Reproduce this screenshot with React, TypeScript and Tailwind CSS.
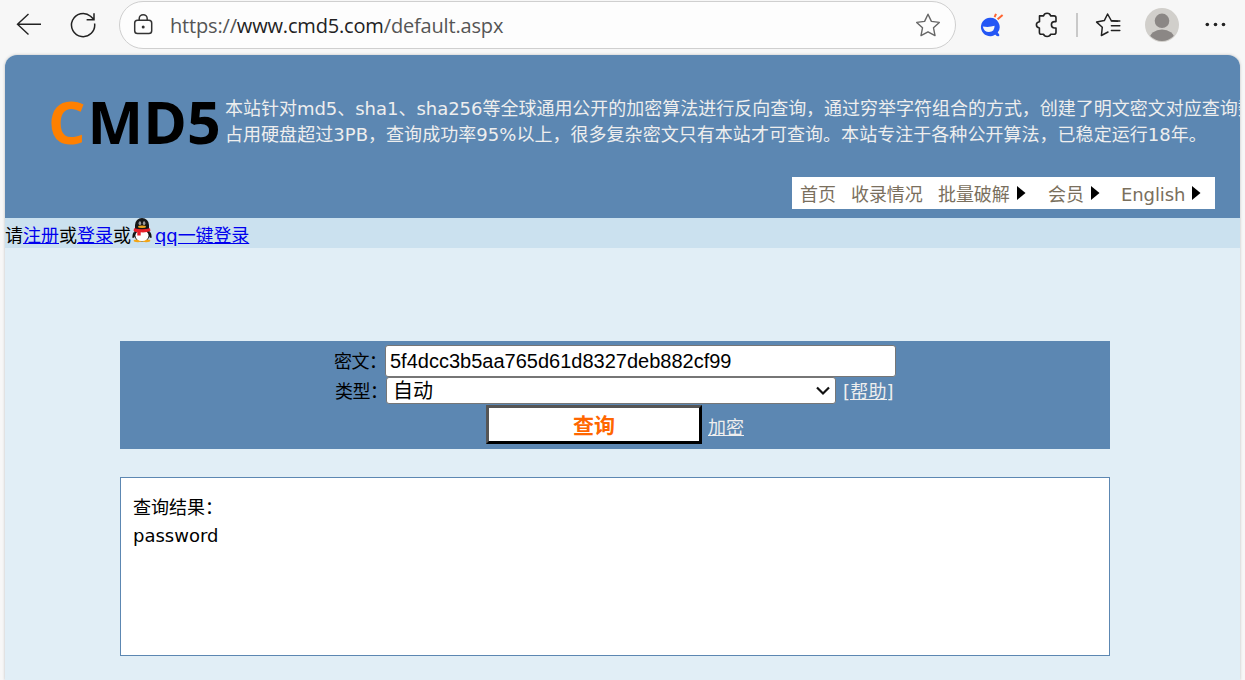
import { useState } from 'react'

const INTRO = [
    {
        text: '本站针对md5、sha1、sha256等全球通用公开的加密算法进行反向查询，通过穷举字符组合的方式，创建了明文密文对应查询数',
        style: 'tracking-[-0.02px]',
    },
    {
        text: '占用硬盘超过3PB，查询成功率95%以上，很多复杂密文只有本站才可查询。本站专注于各种公开算法，已稳定运行18年。',
        style: 'tracking-[0.04px]',
    },
]

const MENU = [
    { label: '首页', sub: false, style: 'w-[51px]' },
    { label: '收录情况', sub: false, style: 'w-[87px]' },
    { label: '批量破解', sub: true, style: 'w-[110px]' },
    { label: '会员', sub: true, style: 'w-[73px]' },
    { label: 'English', sub: true, style: 'w-[86px]' },
]

const Toolbar = () => {
    return (
        <div className="flex h-[55px] shrink-0 items-start">
            <svg className="ml-4 mt-3 shrink-0" width="26" height="26" viewBox="0 0 26 26" fill="none" stroke="#222" strokeWidth="1.4">
                <path d="M25 12.3H1.5M12.5 2L1.5 12.3L12.5 22.5" />
            </svg>
            <svg className="ml-[28px] mt-3 shrink-0" width="27" height="26" viewBox="0 0 27 26" fill="none" stroke="#222" strokeWidth="1.5">
                <path d="M24.6 11.5A11.6 11.6 0 1 1 20.6 4.2L24 7.6M24 1.2V7.7H16.6" />
            </svg>
            <div className="ml-[22px] mt-px flex h-12 w-[837px] shrink-0 items-center rounded-full border-[1.5px] border-[#cfcfcf] bg-[#fdfdfd]">
                <svg className="-mt-px ml-3 shrink-0" width="22" height="24" viewBox="0 0 22 24" fill="none" stroke="#333" strokeWidth="1.5">
                    <rect x="2.7" y="7.2" width="17" height="13.3" rx="2.8" />
                    <path d="M7.2 7V5.7a4 4 0 0 1 8 0V7" />
                    <circle cx="11.2" cy="14" r="1.5" fill="#333" stroke="none" />
                </svg>
                <span className="ml-4 mt-0.5 whitespace-nowrap font-['Open_Sans',sans-serif] text-[20px] leading-7 tracking-[-0.17px] text-[#555]">
                    https://<span className="text-[#222]">www.cmd5.com</span>/default.aspx
                </span>
                <svg className="ml-auto mr-[14px] shrink-0" width="26" height="26" viewBox="0 0 26 26" fill="none" stroke="#666" strokeWidth="1.4" strokeLinejoin="round">
                    <path d="M13 2.2L16.4 9.4L24.3 10.4L18.5 15.8L20 23.6L13 19.8L6 23.6L7.5 15.8L1.7 10.4L9.6 9.4Z" />
                </svg>
            </div>
            <svg className="ml-6 mt-3 shrink-0" width="24" height="26" viewBox="0 0 24 26">
                <path d="M10 5.8a9.2 9.2 0 1 0 5 17l.5 0q.8 1.8 3 1.4q1.5-.5.4-2.2l-1.2-1.4A9.2 9.2 0 0 0 10 5.8Z" fill="#2456f5" />
                <path d="M2.8 14.5Q9 15.6 14.6 13.8Q14.6 20 9 20Q4 20 2.8 14.5Z" fill="#f7f7f7" />
                <path d="M14.6 5.2L16 1.8M17.6 7.3L22.6 3" stroke="#ff6430" strokeWidth="2" />
            </svg>
            <svg className="ml-[31px] mt-3 shrink-0" width="24" height="26" viewBox="0 0 24 26" fill="none" stroke="#222" strokeWidth="1.6" strokeLinejoin="round">
                <path d="M4.5 3.9H8.6Q9.2 1.3 12.1 1.3T15.6 3.9H19q2 0 2 2V9.6H19.6a3.2 3.2 0 0 0 0 6.4H21V20.3q0 2-2 2H15.6Q15 24.5 12.1 24.5T8.6 22.3H6q-1.6 0-1.6-2V16Q1.4 15.5 1.4 12.8T4.5 9.7Z" />
            </svg>
            <div className="ml-[17px] mt-[13px] h-6 w-[1.5px] shrink-0 bg-[#c9c9c9]" />
            <svg className="ml-[17px] mt-3 shrink-0" width="26" height="26" viewBox="0 0 26 26" fill="none" stroke="#222" strokeWidth="1.5" strokeLinejoin="round" strokeLinecap="round">
                <path d="M22.5 9.2L16.2 8.5L12.6 2L9.3 8.6L1.6 10.1L7.3 15.2L6.4 23.5L13 20" />
                <path d="M16.4 9.1H24.8M16.4 13.8H24.8M16.4 18.4H24.8" />
            </svg>
            <svg className="ml-6 mt-2 shrink-0" width="34" height="34" viewBox="0 0 34 34">
                <clipPath id="avatar"><circle cx="17" cy="17" r="16" /></clipPath>
                <circle cx="17" cy="17" r="17" fill="#d1cfcb" />
                <g fill="#8b8785" clipPath="url(#avatar)">
                    <circle cx="17" cy="12.8" r="7.3" />
                    <ellipse cx="17" cy="31" rx="12.5" ry="9.5" />
                </g>
            </svg>
            <svg className="ml-[26px] mt-[22px] shrink-0" width="21" height="6" viewBox="0 0 21 6" fill="#222">
                <circle cx="2.3" cy="2.5" r="1.8" />
                <circle cx="10.5" cy="2.5" r="1.8" />
                <circle cx="18.5" cy="2.5" r="1.8" />
            </svg>
        </div>
    )
}

const Penguin = () => {
    return (
        <svg className="ml-px shrink-0" width="20" height="25" viewBox="0 0 20 25">
            <path d="M2.6 12.5Q-.3 17 .6 20Q1.8 20.6 3 17.5M17.4 12.5Q20.3 17 19.4 20Q18.2 20.6 17 17.5" fill="#111" />
            <ellipse cx="10" cy="16.8" rx="8" ry="6.8" fill="#111" />
            <ellipse cx="5.8" cy="22.8" rx="4.2" ry="1.4" fill="#f2a516" />
            <ellipse cx="14.2" cy="22.8" rx="4.2" ry="1.4" fill="#f2a516" />
            <ellipse cx="10" cy="17.6" rx="6.6" ry="5.5" fill="#fff" />
            <path d="M3 11.5V7A7 7 0 0 1 17 7V11.5Z" fill="#161616" />
            <ellipse cx="7.9" cy="5.2" rx="1.3" ry="1.9" fill="#999" />
            <ellipse cx="12.1" cy="5.2" rx="1.3" ry="1.9" fill="#999" />
            <ellipse cx="10" cy="8.7" rx="4" ry="1.2" fill="#eda51c" />
            <path d="M2 10.3Q10 12 18 10.3L18.4 13Q14 14.8 8.7 14.3V17.5H5.3V14.2Q3 13.8 1.6 13Z" fill="#e8202a" />
        </svg>
    )
}

const App = () => {

    const [hash, setHash] = useState('5f4dcc3b5aa765d61d8327deb882cf99')

    return (
        <div className="flex h-[680px] w-[1245px] flex-col overflow-hidden bg-[#f7f7f7] font-['DejaVu_Sans','Noto_Sans_CJK_SC',sans-serif] text-[18px] text-black">
            <Toolbar />
            <div className="ml-[5px] flex w-[1235px] flex-1 flex-col overflow-hidden rounded-t-xl bg-[#e1eef6] shadow-[0_0_3px_#bbb]">

                <header className="flex h-[163px] shrink-0 flex-col bg-[#5c87b2]">
                    <div className="flex h-[122px] shrink-0">
                        <div className="ml-[43px] mt-[25px] w-[177px] shrink-0 whitespace-nowrap font-['Open_Sans',sans-serif] text-[59px] font-bold leading-[82px]">
                            <span className="mr-[2px] text-[#ff8000]">C</span>MD5
                        </div>
                        <div className="mt-[41px] whitespace-nowrap leading-[26px] text-[#eee]">
                            {INTRO.map((line) => (
                                <p key={line.text} className={line.style}>{line.text}</p>
                            ))}
                        </div>
                    </div>
                    <nav className="ml-auto mr-[25px] flex h-8 w-[423px] items-center bg-white pl-2 pt-0.5 text-[#7a6f5d]">
                        {MENU.map((item) => (
                            <a key={item.label} className={`flex shrink-0 items-center whitespace-nowrap tracking-[-0.1px] ${item.style}`}>
                                {item.label}
                                {item.sub && (
                                    <svg className="-mt-[3px] ml-[7px]" width="9" height="16" viewBox="0 0 9 16">
                                        <path d="M0 1L8.5 8L0 15Z" fill="#000" />
                                    </svg>
                                )}
                            </a>
                        ))}
                    </nav>
                </header>

                <div className="flex h-[30px] shrink-0 items-start whitespace-nowrap bg-[#cbe1ef] leading-[35px]">
                    <span>请</span>
                    <a className="text-[#0000ee] underline">注册</a>
                    <span>或</span>
                    <a className="text-[#0000ee] underline">登录</a>
                    <span>或</span>
                    <Penguin />
                    <a className="ml-[3px] tracking-[-0.1px] text-[#0000ee] underline">qq一键登录</a>
                </div>

                <main className="mx-[115px] mt-[93px] w-[990px]">
                    <div className="h-[108px] bg-[#5c87b2] pt-1">
                        <div className="flex h-8 items-center pl-[214px]">
                            <label className="w-[51px] whitespace-nowrap tracking-[-0.5px]">密文：</label>
                            <input
                                className="h-8 w-[511px] rounded-[3px] border border-[#767676] bg-white px-1 font-['Liberation_Sans',sans-serif] text-[20px] outline-none"
                                value={hash}
                                onChange={(e) => setHash(e.target.value)}
                            />
                        </div>
                        <div className="flex h-[27px] items-center pl-[215px]">
                            <label className="mt-0.5 w-[51px] whitespace-nowrap tracking-[-0.5px]">类型：</label>
                            <div className="flex h-[27px] w-[450px] items-center justify-between rounded-[3px] border border-[#767676] bg-white pl-1.5 pr-[5px] text-[20px]">
                                自动
                                <svg width="14" height="10" viewBox="0 0 14 10" fill="none" stroke="#111" strokeWidth="2.2">
                                    <path d="M1 1.5L7 7.5L13 1.5" />
                                </svg>
                            </div>
                            <a className="ml-[7px] mt-0.5 tracking-[0.2px] text-[#eee] underline">[帮助]</a>
                        </div>
                        <div className="flex items-center pl-[366px]">
                            <button className="mt-px h-[39px] w-[216px] border-[3px] border-b-black border-l-[#555] border-r-black border-t-[#555] bg-white pt-[3px] text-[21px] font-bold leading-[30px] text-[#ff6600]">
                                查询
                            </button>
                            <a className="ml-1.5 mt-[7px] text-[#eee] underline">加密</a>
                        </div>
                    </div>

                    <div className="mt-7 h-[179px] border border-[#5c87b2] bg-white pl-3 pt-4 leading-7">
                        <p>查询结果：</p>
                        <p>password</p>
                    </div>
                </main>
            </div>
        </div>
    )
}


export default App
